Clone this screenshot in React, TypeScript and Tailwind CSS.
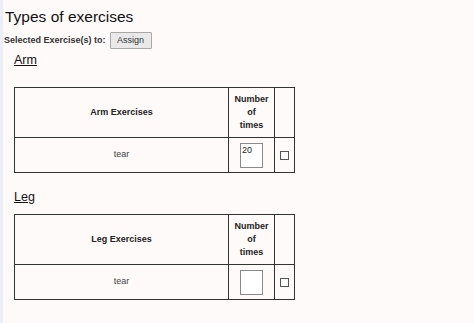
const sections = [
  { name: "Arm", rows: [{ title: "tear", times: "20" }], headMt: "mt-[3px]", tableMt: "mt-[19px]" },
  { name: "Leg", rows: [{ title: "tear", times: "" }], headMt: "mt-[16px]", tableMt: "mt-[9px]" },
];

const ExerciseTable = ({ name, rows }: { name: string; rows: { title: string; times: string }[] }) => (
  <table className="table-fixed border-collapse w-[280px] text-[9px] text-[#222]">
    <colgroup>
      <col className="w-[214px]" />
      <col className="w-[46px]" />
      <col className="w-[20px]" />
    </colgroup>
    <thead>
      <tr className="h-[50px]">
        <th className="border border-[#333] font-bold text-center p-0">{name} Exercises</th>
        <th className="border border-[#333] font-bold text-center p-0 leading-[13px]">
          Number
          <br />
          of
          <br />
          times
        </th>
        <th className="border border-[#333] p-0"></th>
      </tr>
    </thead>
    <tbody>
      {rows.map((row, i) => (
        <tr key={i} className="h-[35px]">
          <td className="border border-[#333] text-center text-[#444] p-0">{row.title}</td>
          <td className="border border-[#333] p-0">
            <div className="flex justify-center">
              <input
                defaultValue={row.times}
                className="w-[23px] h-[25px] border border-[#8a8a8a] bg-white text-[9px] text-[#222] px-[1px] pt-[1px] pb-[12px] leading-none outline-none text-left"
              />
            </div>
          </td>
          <td className="border border-[#333] p-0">
            <div className="flex justify-center">
              <span className="block w-[9px] h-[9px] border border-[#555] bg-white"></span>
            </div>
          </td>
        </tr>
      ))}
    </tbody>
  </table>
);

export default function App() {
  return (
    <div className="min-h-screen w-full bg-[#fffafa] border-l-[3px] border-[#eceef9] font-['Liberation_Sans',Arial,sans-serif] text-[#111]">
      <h1 className="pt-[7px] pl-[2px] text-[15.5px] leading-[20px] font-normal">Types of exercises</h1>
      <div className="mt-[5px] pl-[1px] flex items-center gap-[4px] h-[17px]">
        <span className="text-[9px] font-bold text-[#333]">Selected Exercise(s) to:</span>
        <button className="h-[17px] w-[42px] border border-[#a8a8a8] bg-[#e9e9e9] text-[9px] text-[#333] rounded-[1px]">
          Assign
        </button>
      </div>
      {sections.map((s) => (
        <section key={s.name} className="pl-[11px]">
          <h2 className={`${s.headMt} text-[12.5px] leading-[16px] underline underline-offset-[1px] font-normal`}>
            {s.name}
          </h2>
          <div className={s.tableMt}>
            <ExerciseTable name={s.name} rows={s.rows} />
          </div>
        </section>
      ))}
    </div>
  );
}
